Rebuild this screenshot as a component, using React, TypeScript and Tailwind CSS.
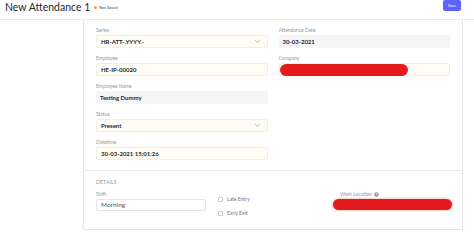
import * as React from "react"

const font = { fontFamily: "Lato, 'Open Sans', sans-serif" }

const Label = ({ children }: { children: React.ReactNode }) => (
  <div className="text-[5px] leading-[7px] h-[7px] mb-[1px] text-[#8d99a6]">{children}</div>
)

const Chevron = () => (
  <svg width="5" height="3" viewBox="0 0 10 6" className="ml-auto mr-[3px]">
    <path d="M1 1l4 4 4-4" fill="none" stroke="#8d99a6" strokeWidth="1.4" strokeLinecap="round" />
  </svg>
)

const Field = ({
  label,
  value,
  tone = "cream",
  select = false,
}: {
  label: string
  value: string
  tone?: "cream" | "gray"
  select?: boolean
}) => (
  <div className="mb-[7px]">
    <Label>{label}</Label>
    <div
      className={
        tone === "cream"
          ? "h-[13px] flex items-center px-[4px] rounded-[2px] bg-[#fffdf4] border border-[#eef0e6]"
          : "h-[13px] flex items-center px-[4px] rounded-[2px] bg-[#f4f5f7]"
      }
    >
      <span className="text-[6px] font-bold text-[#1f272e] leading-none">{value}</span>
      {select && <Chevron />}
    </div>
  </div>
)

const Check = ({ label }: { label: string }) => (
  <div className="flex items-center gap-[4px] h-[7px]">
    <span className="w-[5px] h-[5px] border border-[#c8cfd5] rounded-[1px] bg-white" />
    <span className="text-[5px] text-[#6c7680] leading-none">{label}</span>
  </div>
)

export default function App() {
  return (
    <div className="w-[474px] h-[249px] bg-white overflow-hidden" style={font}>
      <div className="h-[20px] flex items-start border-b border-[#e8ebee]">
        <div className="flex items-center pl-[5px] pt-[1px] h-[14px]">
          <span className="text-[10.5px] text-[#1f272e] leading-none">New Attendance 1</span>
          <span className="ml-[4px] w-[3px] h-[3px] rounded-full bg-[#f8a31c]" />
          <span className="ml-[2px] text-[4px] text-[#36414c] leading-none">Not Saved</span>
        </div>
        <button className="ml-auto mr-[13px] w-[18px] h-[11px] rounded-[2px] bg-[#5e64ff] text-white text-[4px] leading-none">
          Save
        </button>
      </div>
      <div className="flex">
        <div className="w-[83px]" />
        <div className="w-[380px] h-[210px] border-l border-r border-b border-[#e3e7ea] flex flex-col">
          <div className="grid grid-cols-2 gap-x-[11px] px-[12px] pt-[7px] h-[151px] border-b border-[#e8ebee]">
            <div>
              <Field label="Series" value="HR-ATT-.YYYY.-" select />
              <Field label="Employee" value="HE-IP-00020" />
              <Field label="Employee Name" value="Testing Dummy" tone="gray" />
              <Field label="Status" value="Present" select />
              <Field label="Datetime" value="30-03-2021 15:01:26" />
            </div>
            <div>
              <Field label="Attendance Date" value="30-03-2021" tone="gray" />
              <div className="mb-[7px]">
                <Label>Company</Label>
                <div className="h-[13px] flex items-center rounded-[2px] bg-[#fffdf4] border border-[#eef0e6]">
                  <span className="w-[128px] h-[12px] rounded-full bg-[#e31b1d]" />
                </div>
              </div>
            </div>
          </div>
          <div className="px-[12px] pt-[8px]">
            <div className="text-[5px] leading-[7px] text-[#8d99a6] tracking-[0.2px]">DETAILS</div>
            <div className="grid grid-cols-3 gap-x-[12px] mt-[5px]">
              <div>
                <Label>Shift</Label>
                <div className="h-[12px] flex items-center px-[4px] rounded-[2px] bg-white border border-[#e3e7ea]">
                  <span className="text-[6.5px] text-[#4c5a67] leading-none">Morning</span>
                </div>
              </div>
              <div className="pt-[5px] flex flex-col gap-[7px]">
                <Check label="Late Entry" />
                <Check label="Early Exit" />
              </div>
              <div>
                <div className="flex items-center gap-[2px] h-[7px] mb-[1px]">
                  <span className="text-[5px] text-[#8d99a6] leading-none">Work Location</span>
                  <svg width="5" height="5" viewBox="0 0 10 10">
                    <circle cx="5" cy="5" r="4.5" fill="#8d99a6" />
                    <text x="5" y="7.6" fontSize="7" textAnchor="middle" fill="white" fontFamily="Lato, sans-serif" fontWeight="700">?</text>
                  </svg>
                </div>
                <div className="-ml-[7px] w-[119px] h-[11px] rounded-full bg-[#e31b1d] shadow-[0_0_2px_1px_#f8c9c9]" />
              </div>
            </div>
          </div>
        </div>
      </div>
    </div>
  )
}
